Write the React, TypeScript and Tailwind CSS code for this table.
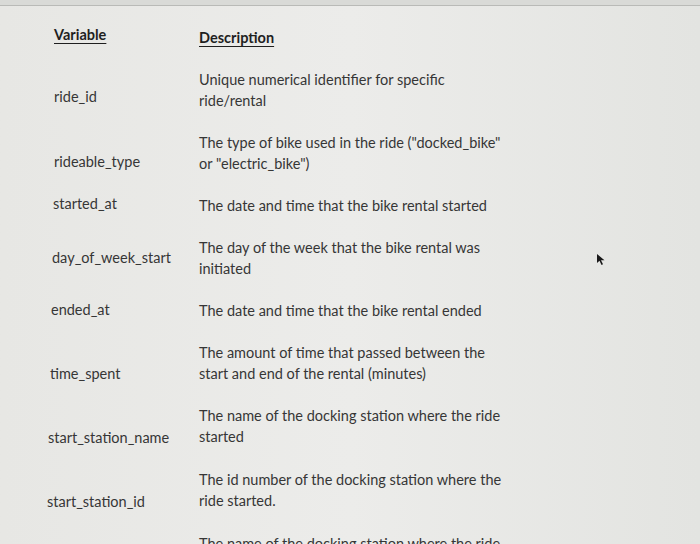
// dx: left inset of the variable name, dy: its drop below the description's first line
const rows: { name: string; desc: string[]; dx: number; dy: number }[] = [
  { name: 'ride_id', desc: ['Unique numerical identifier for specific', 'ride/rental'], dx: 7, dy: 17 },
  { name: 'rideable_type', desc: ['The type of bike used in the ride ("docked_bike"', 'or "electric_bike")'], dx: 7, dy: 19 },
  { name: 'started_at', desc: ['The date and time that the bike rental started'], dx: 6, dy: -2 },
  { name: 'day_of_week_start', desc: ['The day of the week that the bike rental was', 'initiated'], dx: 5, dy: 10 },
  { name: 'ended_at', desc: ['The date and time that the bike rental ended'], dx: 4, dy: -1 },
  { name: 'time_spent', desc: ['The amount of time that passed between the', 'start and end of the rental (minutes)'], dx: 3, dy: 21 },
  { name: 'start_station_name', desc: ['The name of the docking station where the ride', 'started'], dx: 1, dy: 22 },
  { name: 'start_station_id', desc: ['The id number of the docking station where the', 'ride started.'], dx: 0, dy: 22 },
  { name: '', desc: ['The name of the docking station where the ride', ''], dx: 0, dy: 22 },
]

export default function App() {
  return (
    <div
      className="relative h-[544px] w-[700px] overflow-hidden bg-gradient-to-r from-[#e7e7e4] via-[#ececea] to-[#e3e4e1] text-[#363636]"
      style={{ fontFamily: 'Lato, "Open Sans", sans-serif' }}
    >
      {/* monitor bezel strip */}
      <div className="h-[6px] bg-[#d9dad7] border-b border-[#b9bab7]" />

      <div className="flex flex-col pl-[47px] pt-[18px] text-[14.5px] leading-[21px]">
        <div className="grid grid-cols-[152px_1fr] items-start">
          <span className="font-bold underline underline-offset-[3px] text-[#1f1f1f] pl-[7px]">Variable</span>
          <span className="font-bold underline underline-offset-[3px] text-[#1f1f1f] mt-[3px]">Description</span>
        </div>

        <div className="mt-[21px] flex flex-col gap-[21px]">
          {rows.map((r, i) => (
            <div key={i} className="grid grid-cols-[152px_1fr] items-start">
              <span style={{ paddingLeft: r.dx, marginTop: r.dy }}>{r.name}</span>
              <div className="flex flex-col">
                {r.desc.map((d, j) => (
                  <span key={j} className="h-[21px] whitespace-nowrap">{d}</span>
                ))}
              </div>
            </div>
          ))}
        </div>
      </div>

      {/* mouse pointer */}
      <svg className="absolute left-[596px] top-[253px]" width="10" height="13" viewBox="0 0 10 13">
        <path d="M1 1 L1 10 L3.5 7.8 L5.5 12 L7 11.3 L5 7.2 L8.5 7.2 Z" fill="#1a1a1a" />
      </svg>
    </div>
  )
}
